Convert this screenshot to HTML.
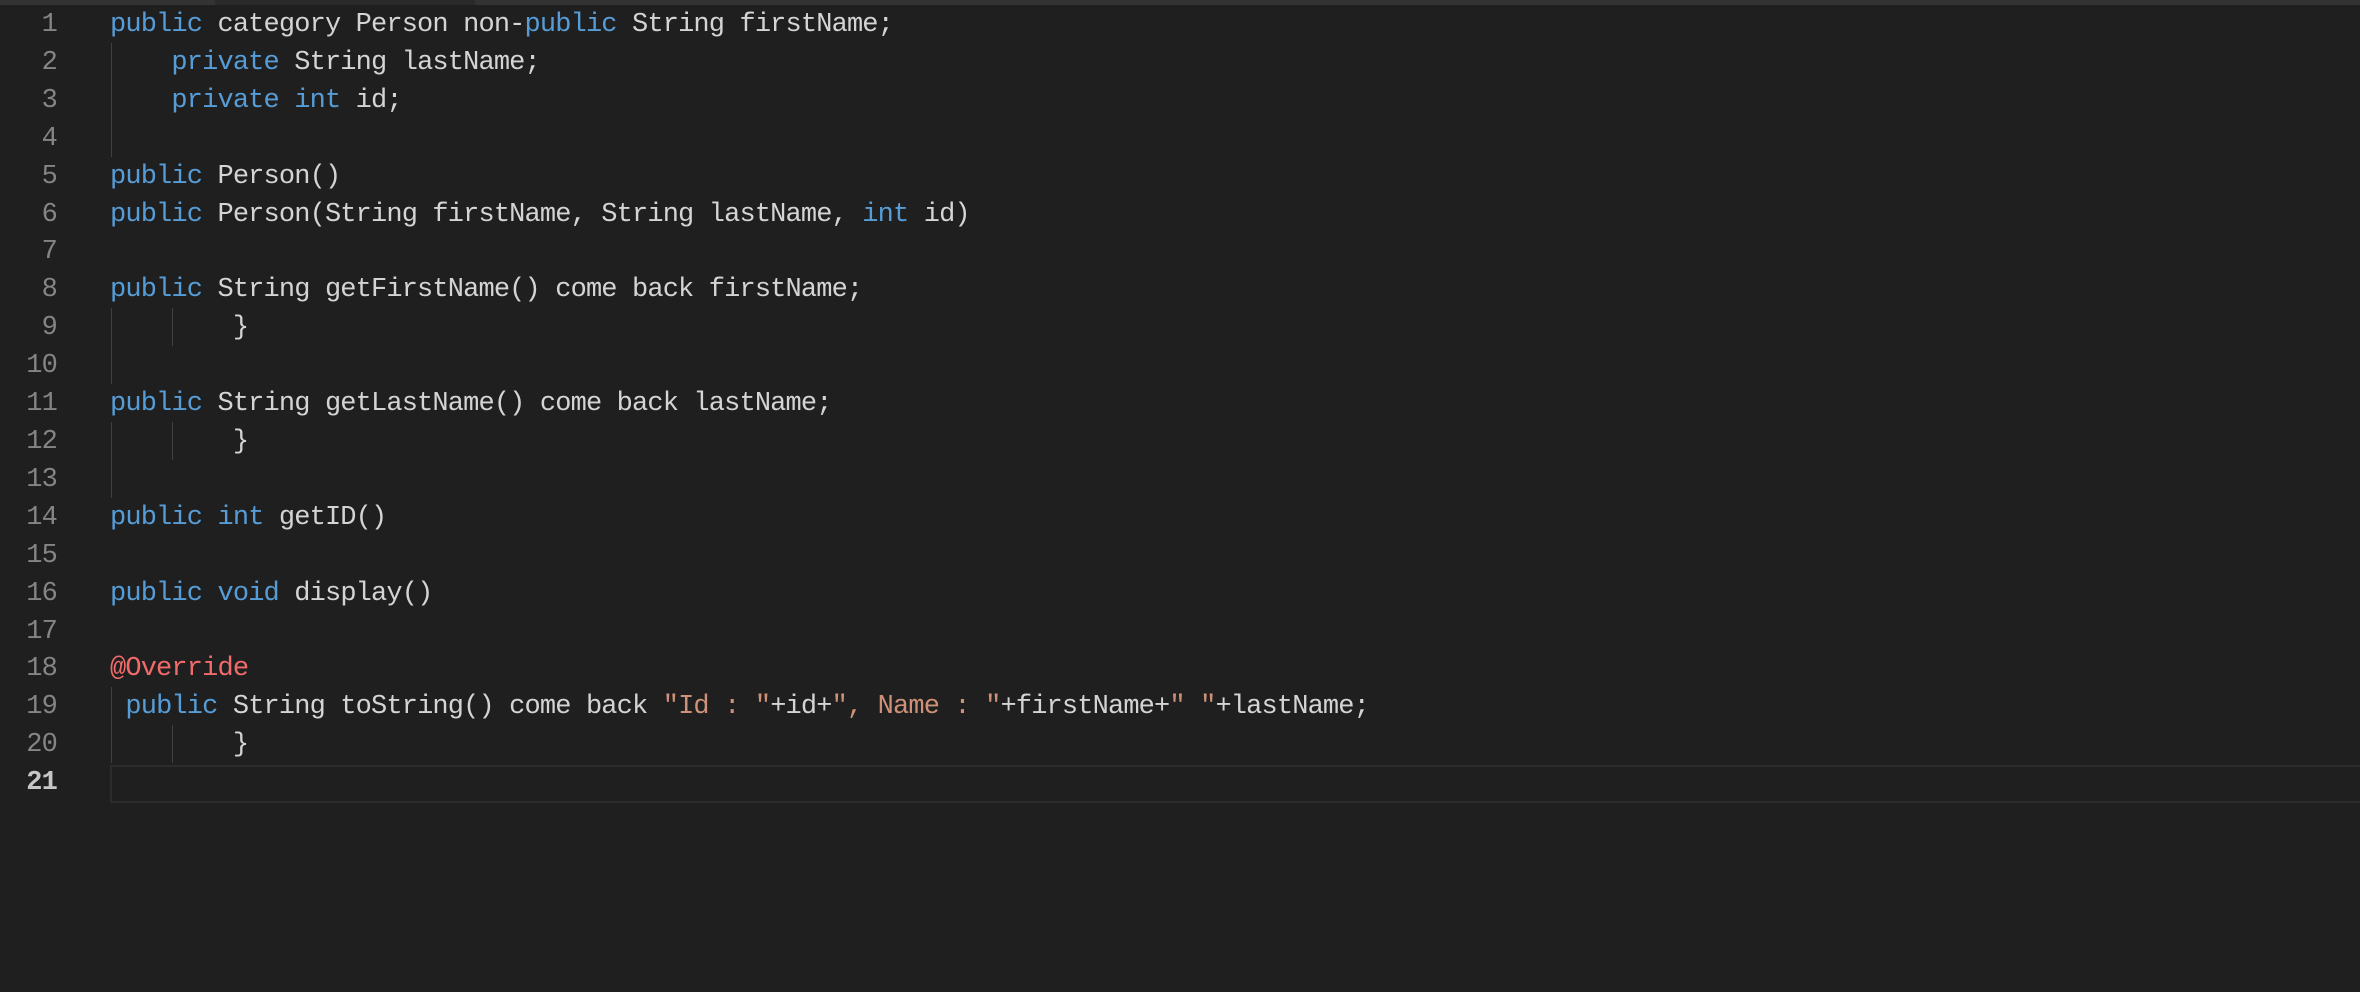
<!DOCTYPE html>
<html><head><meta charset="utf-8"><style>
html,body{margin:0;padding:0;background:#1f1f1f;width:2360px;height:992px;overflow:hidden}
.top{position:absolute;left:0;top:0;width:2360px;height:5px;background:#333}
.top .d{position:absolute;left:215px;width:260px;top:0;height:5px;background:#2a2a2a}
.ln{position:absolute;left:0;top:7px;width:57px;text-align:right;font:27px/37.9px "Liberation Mono",monospace;letter-spacing:-0.85px;color:#858585}
.ln div.a{color:#c6c6c6;font-weight:bold}
.code{position:absolute;left:110px;top:7px;font:27px/37.9px "Liberation Mono",monospace;letter-spacing:-0.85px;color:#d4d4d4;white-space:pre}
.k{color:#569cd6}.s{color:#ce9178}.an{color:#f16b6b}
.g{position:absolute;width:1px;background:#404040}
.cur{position:absolute;left:110px;top:765px;right:0;height:34px;border:2px solid #2c2c2c;border-right:none}
</style></head><body>
<div class="top"><div class="d"></div></div>
<div class="cur"></div>
<div class="ln"><div>1</div><div>2</div><div>3</div><div>4</div><div>5</div><div>6</div><div>7</div><div>8</div><div>9</div><div>10</div><div>11</div><div>12</div><div>13</div><div>14</div><div>15</div><div>16</div><div>17</div><div>18</div><div>19</div><div>20</div><div class="a">21</div></div>
<div class="g" style="left:111px;top:43px;height:114px"></div>
<div class="g" style="left:111px;top:308px;height:76px"></div>
<div class="g" style="left:172px;top:308px;height:38px"></div>
<div class="g" style="left:111px;top:422px;height:76px"></div>
<div class="g" style="left:172px;top:422px;height:38px"></div>
<div class="g" style="left:111px;top:687px;height:76px"></div>
<div class="g" style="left:172px;top:725px;height:38px"></div>
<div class="code"><span class="k">public</span> category Person non-<span class="k">public</span> String firstName;
    <span class="k">private</span> String lastName;
    <span class="k">private</span> <span class="k">int</span> id;

<span class="k">public</span> Person()
<span class="k">public</span> Person(String firstName, String lastName, <span class="k">int</span> id)

<span class="k">public</span> String getFirstName() come back firstName;
        }

<span class="k">public</span> String getLastName() come back lastName;
        }

<span class="k">public</span> <span class="k">int</span> getID()

<span class="k">public</span> <span class="k">void</span> display()

<span class="an">@Override</span>
 <span class="k">public</span> String toString() come back <span class="s">"Id : "</span>+id+<span class="s">", Name : "</span>+firstName+<span class="s">" "</span>+lastName;
        }
</div>
</body></html>
